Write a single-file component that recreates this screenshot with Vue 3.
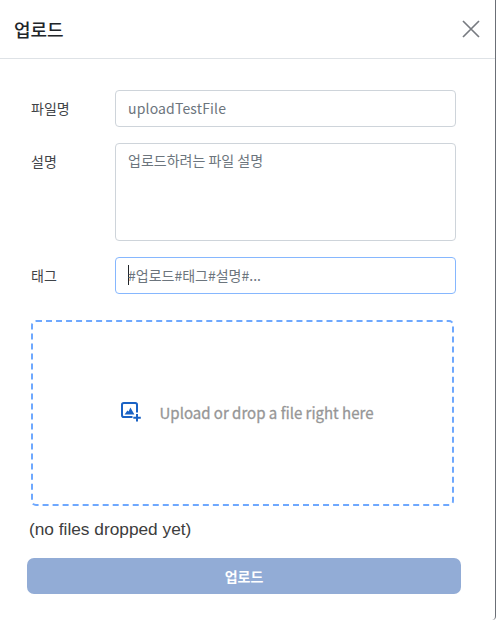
<template>
  <div class="modal">
    <header class="modal-header">
      <h1 class="title">업로드</h1>
      <button class="close" type="button" aria-label="닫기">
        <svg width="20" height="20" viewBox="0 0 20 20" fill="none" stroke="#777b80" stroke-width="1.7">
          <path d="M2 2L18 18M18 2L2 18" />
        </svg>
      </button>
    </header>

    <form class="modal-body" @submit.prevent>
      <div class="field">
        <label class="label">파일명</label>
        <div class="control input name">uploadTestFile</div>
      </div>
      <div class="field field-top">
        <label class="label">설명</label>
        <div class="control textarea">업로드하려는 파일 설명</div>
      </div>
      <div class="field">
        <label class="label">태그</label>
        <div class="control input focused"><span class="caret"></span>{{ tagHint }}</div>
      </div>

      <div class="dropzone">
        <svg class="drop-icon" width="20" height="20" viewBox="0 0 20 20" fill="none">
          <path d="M11.5 15H2.8C1.8 15 1 14.2 1 13.2V2.8C1 1.8 1.8 1 2.8 1H14.2C15.2 1 16 1.8 16 2.8V10.5" stroke="#1a62c4" stroke-width="2" />
          <path d="M3.6 12.4L6.4 8.6L7.6 9.6L9.4 5.6L13.4 12.4Z" fill="#1a62c4" />
          <path d="M16 12V19.5M12.3 15.8H19.8" stroke="#1a62c4" stroke-width="2" />
        </svg>
        <span class="drop-text">Upload or drop a file right here</span>
      </div>
      <p class="status">(no files dropped yet)</p>
      <button class="submit" type="submit">업로드</button>
    </form>
  </div>
</template>

<script setup>
const tagHint = '#업로드#태그#설명#...'
</script>

<style>
html,
body {
  margin: 0;
  background: #fff;
}
</style>

<style scoped>
.modal {
  box-sizing: border-box;
  width: 496px;
  height: 620px;
  background: #fff;
  border-right: 1px solid #6b6f76;
  border-bottom-right-radius: 4px;
  font-family: "Noto Sans CJK KR", "Noto Sans", sans-serif;
  color: #212529;
}

.modal-header {
  display: flex;
  align-items: center;
  justify-content: space-between;
  height: 59px;
  box-sizing: border-box;
  padding: 0 14px;
  border-bottom: 1px solid #dee2e6;
}

.title {
  margin: 0;
  font-size: 18px;
  font-weight: 500;
}

.close {
  display: flex;
  padding: 0;
  border: 0;
  background: none;
}

.modal-body {
  padding: 31px 34px 0 27px;
}

.field {
  display: flex;
  align-items: center;
  margin-right: 5px;
  margin-bottom: 16px;
}

.field-top {
  align-items: flex-start;
}

.label {
  box-sizing: border-box;
  width: 88px;
  padding-left: 4px;
  padding-bottom: 2px;
  font-size: 14px;
  line-height: 34px;
  color: #3f4347;
}

.field-top .label {
  padding-bottom: 0;
  line-height: 36px;
}

.control {
  box-sizing: border-box;
  flex: 1;
  border: 1px solid #ced4da;
  border-radius: 4px;
  padding: 0 12px;
  font-size: 14px;
  color: #6c757d;
  background: #fff;
}

.input {
  display: flex;
  align-items: center;
  height: 37px;
  padding-bottom: 2px;
}

.name {
  letter-spacing: 0.16px;
}

.textarea {
  height: 98px;
  padding-top: 4px;
  line-height: 24px;
}

.focused {
  border-color: #86b7fe;
}

.caret {
  width: 1px;
  height: 20px;
  margin-right: -1px;
  background: #212529;
}

.dropzone {
  display: flex;
  align-items: center;
  justify-content: center;
  gap: 19px;
  box-sizing: border-box;
  height: 186px;
  margin: 26px 7px 0 4px;
  padding-left: 9px;
  padding-bottom: 2px;
  border: 2px dashed #6ea8fe;
  border-radius: 5px;
  background: #fff;
}

.drop-text {
  font-size: 15px;
  font-weight: 400;
  color: #969696;
  -webkit-text-stroke: 0.3px #969696;
}

.status {
  margin: 13px 0 0 2px;
  font-family: "Liberation Sans", Arial, sans-serif;
  font-size: 17.3px;
  line-height: 20px;
  color: #3d3d3d;
}

.submit {
  display: block;
  width: 434px;
  height: 36px;
  margin-top: 19px;
  padding: 0;
  border: 0;
  border-radius: 7px;
  background: #92acd6;
  color: #fff;
  font-family: "Noto Sans CJK KR", "Noto Sans", sans-serif;
  font-size: 14px;
  font-weight: 700;
}
</style>
